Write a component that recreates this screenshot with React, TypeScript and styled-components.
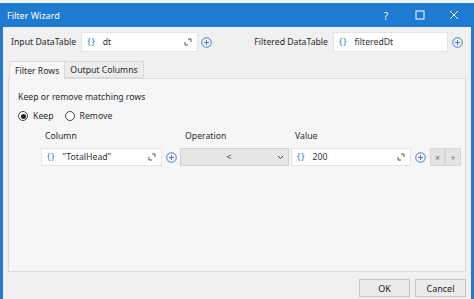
import React from "react";
import styled, { createGlobalStyle } from "styled-components";

const Global = createGlobalStyle`
  html, body { margin: 0; padding: 0; width: 474px; height: 299px; overflow: hidden; background: #f7f7f7; }
  body { font-family: "Noto Sans", "Open Sans", sans-serif; font-size: 8.7px; color: #2b2b2b; }
  * { box-sizing: border-box; }
`;

const Screen = styled.div`
  display: flex;
  flex-direction: column;
  width: 474px;
  height: 299px;
  padding-top: 3px;
  background: #f4f4f4;
`;

const Frame = styled.div`
  flex: 1;
  display: flex;
  flex-direction: column;
  min-height: 0;
  background: #1f7ad1;
  padding: 0 3px;
`;

const TitleBar = styled.div`
  height: 24px;
  display: flex;
  align-items: center;
  padding-left: 4px;
  color: #fff;
`;

const Title = styled.span`
  flex: 1;
  font-size: 9px;
`;

const TitleButton = styled.span`
  width: 34px;
  height: 24px;
  display: flex;
  align-items: center;
  justify-content: center;
  color: #e8f1fb;
  font-size: 11px;
`;

const Body = styled.div`
  flex: 1;
  display: flex;
  flex-direction: column;
  min-height: 0;
  background: #f0f0f0;
  padding: 5px 5px 0 5px;
`;

const TopRow = styled.div`
  display: flex;
  align-items: center;
  justify-content: space-between;
  height: 20px;
  padding-left: 3px;
`;

const Group = styled.div`
  display: flex;
  align-items: center;
`;

const Label = styled.span`
  margin-right: 5px;
  white-space: nowrap;
`;

const Field = styled.div<{ $w: number }>`
  width: ${(p) => p.$w}px;
  height: ${(p) => (p.$w > 0 ? "100%" : "auto")};
  display: flex;
  align-items: center;
  background: #fff;
  border: 1px solid #e4e4e4;
  padding: 0 5px 0 5px;
  white-space: nowrap;
`;

const Brace = styled.span`
  color: #2e74c8;
  margin-right: 7px;
  letter-spacing: 1px;
`;

const FieldText = styled.span`
  flex: 1;
  color: #333;
`;

const AddBtn = styled.span<{ $w: number }>`
  width: ${(p) => p.$w}px;
  height: 100%;
  display: flex;
  align-items: center;
  justify-content: center;
`;

const Tabs = styled.div`
  display: flex;
  margin-top: 9px;
  padding-left: 1px;
  height: 17px;
`;

const Tab = styled.div<{ $active?: boolean }>`
  display: flex;
  align-items: center;
  padding: 0 5px;
  background: ${(p) => (p.$active ? "#f6f6f6" : "#ececec")};
  border: 1px solid #dadada;
  border-bottom: ${(p) => (p.$active ? "none" : "1px solid #dadada")};
  border-left: ${(p) => (p.$active ? "1px solid #dadada" : "none")};
  margin-bottom: ${(p) => (p.$active ? "-1px" : "0")};
  position: relative;
  z-index: ${(p) => (p.$active ? 1 : 0)};
  height: ${(p) => (p.$active ? "18px" : "17px")};
`;

const Panel = styled.div`
  height: 194px;
  background: #f6f6f6;
  border: 1px solid #dadada;
  padding: 12px 9px 0 9px;
  display: flex;
  flex-direction: column;
`;

const Caption = styled.div`
  height: 12px;
  line-height: 12px;
`;

const RadioRow = styled.div`
  display: flex;
  align-items: center;
  margin-top: 7px;
  height: 12px;
  gap: 11px;
`;

const RadioItem = styled.label`
  display: flex;
  align-items: center;
  gap: 5px;
`;

const RadioCircle = styled.span<{ $on?: boolean }>`
  width: 10px;
  height: 10px;
  border-radius: 50%;
  border: 1px solid #444;
  background: #fff;
  display: flex;
  align-items: center;
  justify-content: center;
  &::after {
    content: "";
    width: 5px;
    height: 5px;
    border-radius: 50%;
    background: ${(p) => (p.$on ? "#222" : "transparent")};
  }
`;

const Grid = styled.div`
  display: grid;
  grid-template-columns: 121px 18px 111px 120px 19px 15px 16px;
  grid-template-rows: 12px 18px;
  row-gap: 6px;
  margin-top: 8px;
  margin-left: 23px;
  align-items: center;
`;

const Header = styled.span<{ $pad: number }>`
  padding-left: ${(p) => p.$pad}px;
`;

const RowField = styled.div`
  height: 18px;
  display: flex;
  align-items: center;
  background: #fff;
  border: 1px solid #e4e4e4;
  padding: 0 5px;
  white-space: nowrap;
`;

const Select = styled.div`
  width: 109px;
  height: 18px;
  display: flex;
  align-items: center;
  background: #e6e6e6;
  border: 1px solid #d2d2d2;
  padding: 0 4px 0 0;
`;

const SelectValue = styled.span`
  flex: 1;
  text-align: center;
  color: #444;
`;

const SmallBtn = styled.span`
  height: 18px;
  display: flex;
  align-items: center;
  justify-content: center;
  background: #e4e4e4;
  border: 1px solid #d6d6d6;
  color: #666;
  font-size: 8px;
`;

const Footer = styled.div`
  display: flex;
  justify-content: flex-end;
  gap: 5px;
  padding-top: 7px;
`;

const Button = styled.button`
  width: 51px;
  height: 18px;
  background: #ebebeb;
  border: 1px solid #c6c6c6;
  font-family: inherit;
  font-size: 9px;
  color: #222;
  padding: 0;
`;

const PlusCircle = () => (
  <svg width="11" height="11" viewBox="0 0 11 11">
    <circle cx="5.5" cy="5.5" r="4.8" fill="none" stroke="#3f6fc2" strokeWidth="0.9" />
    <path d="M5.5 3v5M3 5.5h5" stroke="#3f6fc2" strokeWidth="0.9" />
  </svg>
);

const Expand = () => (
  <svg width="8" height="8" viewBox="0 0 8 8">
    <path d="M1 4v3h3M4 1h3v3" fill="none" stroke="#555" strokeWidth="1" />
  </svg>
);

const Chevron = () => (
  <svg width="7" height="5" viewBox="0 0 7 5">
    <path d="M1 1l2.5 2.5L6 1" fill="none" stroke="#444" strokeWidth="1" />
  </svg>
);

const MaxIcon = () => (
  <svg width="10" height="10" viewBox="0 0 10 10">
    <rect x="1" y="1" width="8" height="8" fill="none" stroke="#fff" strokeWidth="1" />
  </svg>
);

const CloseIcon = () => (
  <svg width="10" height="10" viewBox="0 0 10 10">
    <path d="M1 1l8 8M9 1l-8 8" stroke="#fff" strokeWidth="1" />
  </svg>
);

export default function App() {
  return (
    <>
      <Global />
      <Screen>
        <Frame>
          <TitleBar>
            <Title>Filter Wizard</Title>
            <TitleButton>?</TitleButton>
            <TitleButton>
              <MaxIcon />
            </TitleButton>
            <TitleButton>
              <CloseIcon />
            </TitleButton>
          </TitleBar>
          <Body>
            <TopRow>
              <Group style={{ height: "100%" }}>
                <Label>Input DataTable</Label>
                <Field $w={117}>
                  <Brace>{"{}"}</Brace>
                  <FieldText>dt</FieldText>
                  <Expand />
                </Field>
                <AddBtn $w={16}>
                  <PlusCircle />
                </AddBtn>
              </Group>
              <Group style={{ height: "100%" }}>
                <Label>Filtered DataTable</Label>
                <Field $w={115}>
                  <Brace>{"{}"}</Brace>
                  <FieldText>filteredDt</FieldText>
                </Field>
                <AddBtn $w={18}>
                  <PlusCircle />
                </AddBtn>
              </Group>
            </TopRow>
            <Tabs>
              <Tab $active>Filter Rows</Tab>
              <Tab>Output Columns</Tab>
            </Tabs>
            <Panel>
              <Caption>Keep or remove matching rows</Caption>
              <RadioRow>
                <RadioItem>
                  <RadioCircle $on />
                  Keep
                </RadioItem>
                <RadioItem>
                  <RadioCircle />
                  Remove
                </RadioItem>
              </RadioRow>
              <Grid>
                <Header $pad={4}>Column</Header>
                <span />
                <Header $pad={5}>Operation</Header>
                <Header $pad={4}>Value</Header>
                <span />
                <span />
                <span />
                <RowField>
                  <Brace>{"{}"}</Brace>
                  <FieldText>"TotalHead"</FieldText>
                  <Expand />
                </RowField>
                <AddBtn $w={18}>
                  <PlusCircle />
                </AddBtn>
                <Select>
                  <SelectValue>&lt;</SelectValue>
                  <Chevron />
                </Select>
                <RowField>
                  <Brace>{"{}"}</Brace>
                  <FieldText>200</FieldText>
                  <Expand />
                </RowField>
                <AddBtn $w={19}>
                  <PlusCircle />
                </AddBtn>
                <SmallBtn>×</SmallBtn>
                <SmallBtn>+</SmallBtn>
              </Grid>
            </Panel>
            <Footer>
              <Button>OK</Button>
              <Button>Cancel</Button>
            </Footer>
          </Body>
        </Frame>
      </Screen>
    </>
  );
}
